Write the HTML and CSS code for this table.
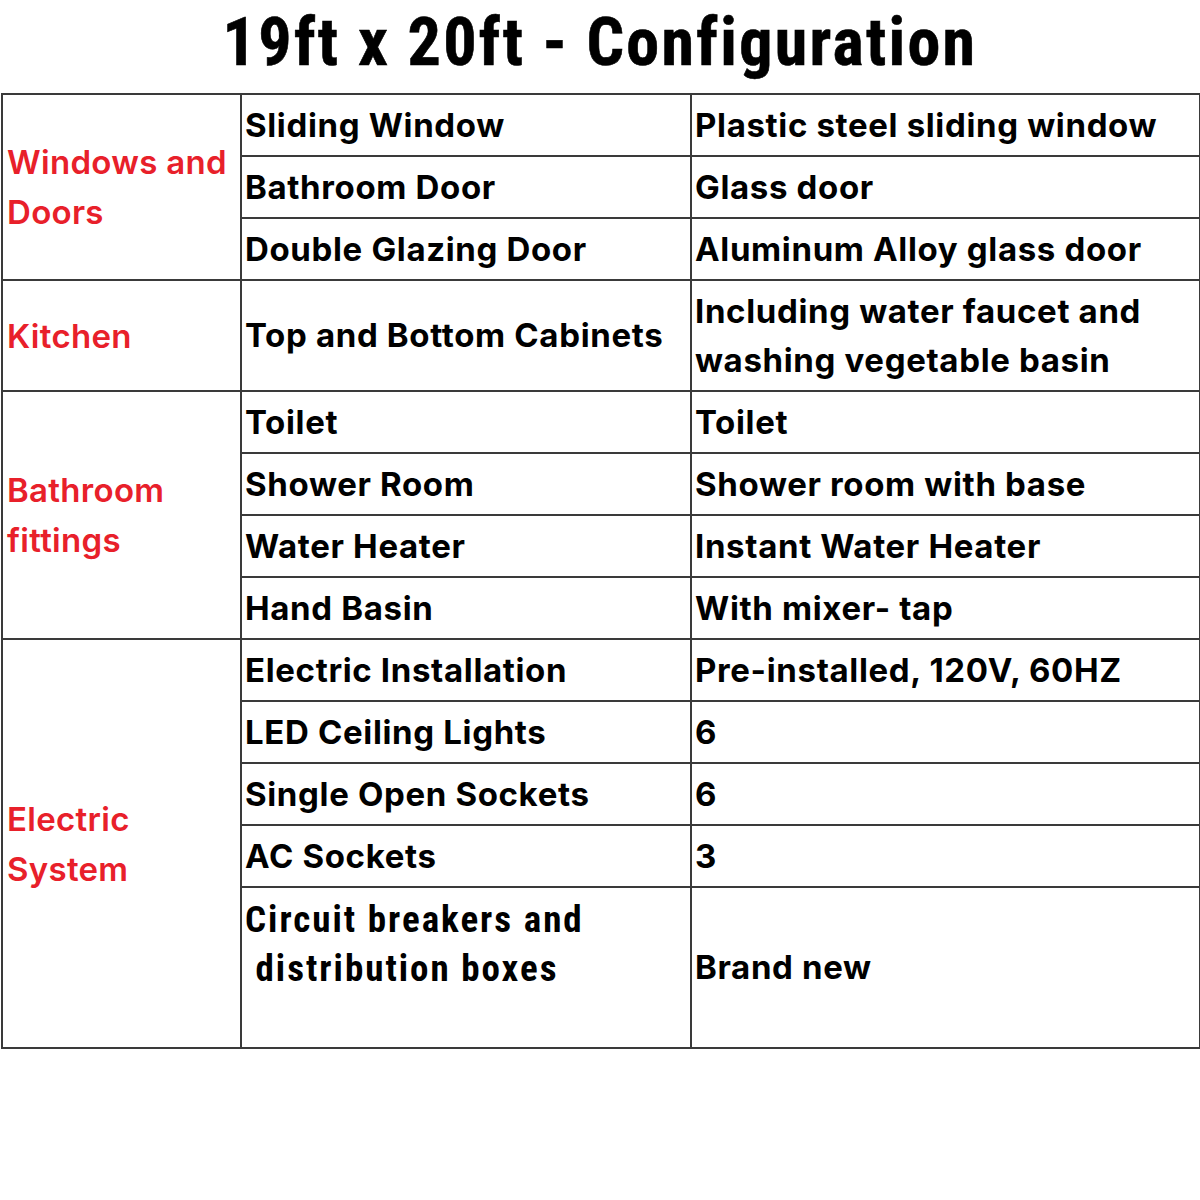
FILE: index.html
```html
<!DOCTYPE html>
<html>
<head>
<meta charset="utf-8">
<link rel="stylesheet" href="styles.css">
</head>
<body>
<h1 class="title">19ft x 20ft - Configuration</h1>
<table class="spec">
  <colgroup><col class="c1"><col class="c2"><col class="c3"></colgroup>
  <tr class="r"><td class="cat" rowspan="3">Windows and<br>Doors</td><td>Sliding Window</td><td>Plastic steel sliding window</td></tr>
  <tr class="r"><td>Bathroom Door</td><td>Glass door</td></tr>
  <tr class="r"><td>Double Glazing Door</td><td>Aluminum Alloy glass door</td></tr>
  <tr class="r2"><td class="cat">Kitchen</td><td>Top and Bottom Cabinets</td><td>Including water faucet and<br>washing vegetable basin</td></tr>
  <tr class="r"><td class="cat" rowspan="4">Bathroom<br>fittings</td><td>Toilet</td><td>Toilet</td></tr>
  <tr class="r"><td>Shower Room</td><td>Shower room with base</td></tr>
  <tr class="r"><td>Water Heater</td><td>Instant Water Heater</td></tr>
  <tr class="r"><td>Hand Basin</td><td>With mixer- tap</td></tr>
  <tr class="r"><td class="cat" rowspan="5">Electric<br>System</td><td>Electric Installation</td><td>Pre-installed, 120V, 60HZ</td></tr>
  <tr class="r"><td>LED Ceiling Lights</td><td>6</td></tr>
  <tr class="r"><td>Single Open Sockets</td><td>6</td></tr>
  <tr class="r"><td>AC Sockets</td><td>3</td></tr>
  <tr class="r3"><td class="narrow">Circuit breakers and<br>&nbsp;distribution boxes<br>&nbsp;</td><td>Brand new</td></tr>
</table>
</body>
</html>
```
FILE: styles.css
```css
html, body {
  margin: 0;
  padding: 0;
  background: #fff;
}
body {
  width: 1200px;
  font-family: Inter, "Noto Sans", sans-serif;
  color: #000;
}
.title {
  margin: 0;
  height: 93px;
  box-sizing: border-box;
  padding-top: 8px;
  text-align: center;
  font-family: "Liberation Sans Narrow", "Roboto Condensed", Roboto, sans-serif;
  font-weight: 700;
  font-size: 66px;
  line-height: 70px;
  letter-spacing: 2.3px;
  -webkit-text-stroke: 0.6px #000;
}
.spec {
  border-collapse: collapse;
  margin-left: 1px;
  width: 1198px;
  table-layout: fixed;
}
.c1 { width: 239px; }
.c2 { width: 450px; }
.c3 { width: 509px; }
.spec td {
  border: 2px solid #3a3a3a;
  padding: 0 3px;
  font-weight: 700;
  font-size: 33px;
  line-height: 49px;
  vertical-align: middle;
  white-space: nowrap;
  letter-spacing: 0.65px;
}
.spec td.cat {
  color: #e8202a;
  font-weight: 600;
  padding-left: 4px;
  line-height: 50px;
  letter-spacing: 0.3px;
}
.r td { height: 60px; }
.r2 td { height: 109px; }
.r3 td { height: 157px; }
.spec td.narrow {
  font-family: "Liberation Sans Narrow", "Roboto Condensed", Roboto, sans-serif;
  font-size: 37px;
  letter-spacing: 2px;
  padding-top: 2px;
}
```
